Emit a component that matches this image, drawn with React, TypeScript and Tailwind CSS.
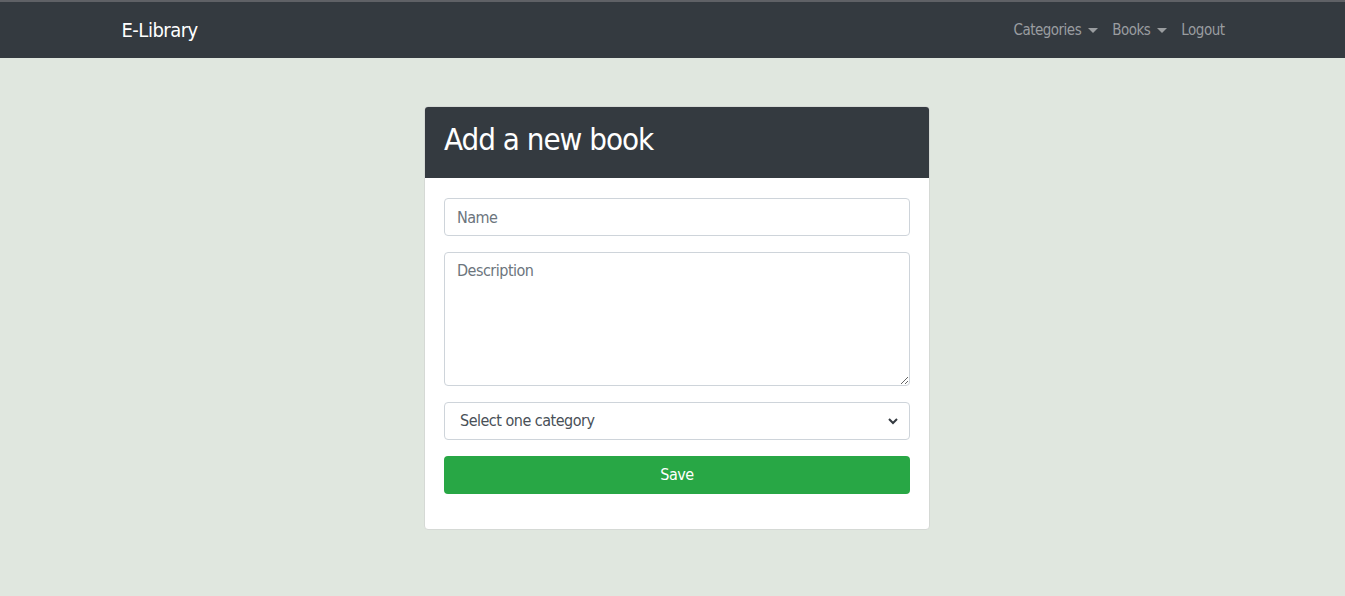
const font = { fontFamily: '"Liberation Sans Narrow", "DejaVu Sans Condensed", "Roboto Condensed", "Liberation Sans", sans-serif' };

function Caret() {
  return <span className="ml-[7px] inline-block h-0 w-0 border-x-[5px] border-t-[5px] border-x-transparent border-t-[#9a9da0] align-middle" />;
}

export default function App() {
  return (
    <div className="min-h-[596px] bg-[#e0e7df] tracking-[-0.5px]" style={font}>
      <nav className="h-[58px] border-t-2 border-[#5f6166] bg-[#343a40]">
        <div className="mx-auto flex h-full max-w-[1140px] items-center justify-between pl-[19px] pr-[18px]">
          <a className="text-[20px] text-white">E-Library</a>
          <div className="flex items-center gap-[14px] text-[15px] text-[#9a9da0]">
            <a className="flex items-center">Categories<Caret /></a>
            <a className="flex items-center">Books<Caret /></a>
            <a>Logout</a>
          </div>
        </div>
      </nav>
      <div className="flex justify-center pl-[9px] pt-[48px]">
        <div className="w-[506px] overflow-hidden rounded-[4px] border border-[#d5d9d5] bg-white">
          <div className="flex h-[71px] items-center bg-[#343a40] px-[19px] pb-[6px]">
            <h1 className="text-[31px] tracking-[-1px] text-white">Add a new book</h1>
          </div>
          <form className="flex flex-col gap-[16px] px-[19px] pb-[35px] pt-[20px]">
            <input
              placeholder="Name"
              className="h-[38px] rounded-[4px] border border-[#ced4da] px-[12px] text-[16px] text-[#495057] placeholder:text-[#6c757d]"
            />
            <textarea
              placeholder="Description"
              className="h-[134px] rounded-[4px] border border-[#ced4da] px-[12px] py-[6px] text-[16px] text-[#495057] placeholder:text-[#6c757d]"
            />
            <div className="relative">
              <select className="h-[38px] w-full appearance-none rounded-[4px] border border-[#ced4da] bg-white pl-[15px] text-[16px] text-[#495057]">
                <option>Select one category</option>
              </select>
              <svg className="pointer-events-none absolute right-[12px] top-[15px]" width="10" height="8" viewBox="0 0 10 8">
                <path d="M1 2l4 4 4-4" fill="none" stroke="#343a40" strokeWidth="2" />
              </svg>
            </div>
            <button type="button" className="h-[38px] rounded-[4px] bg-[#28a745] text-[16px] text-white">
              Save
            </button>
          </form>
        </div>
      </div>
    </div>
  );
}
